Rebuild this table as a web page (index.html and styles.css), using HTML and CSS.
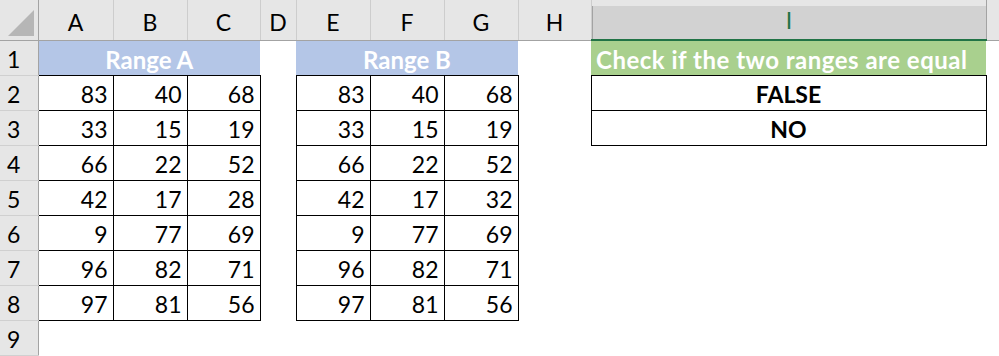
FILE: index.html
```html
<!DOCTYPE html>
<html lang="en">
<head>
<meta charset="utf-8">
<title>Compare ranges</title>
<link rel="stylesheet" href="styles.css">
</head>
<body>
<table class="sheet">
  <colgroup>
    <col class="c-row">
    <col class="c-a"><col class="c-b"><col class="c-c">
    <col class="c-d">
    <col class="c-e"><col class="c-f"><col class="c-g">
    <col class="c-h">
    <col class="c-i">
    <col class="c-j">
  </colgroup>
  <thead>
    <tr class="hdr">
      <th class="corner"><span class="tri"></span></th>
      <th>A</th><th>B</th><th>C</th><th>D</th>
      <th>E</th><th>F</th><th>G</th><th>H</th>
      <th class="sel"><div class="sel-in">I</div></th>
      <th class="last"></th>
    </tr>
  </thead>
  <tbody>
    <tr>
      <th class="rn">1</th>
      <td colspan="3" class="title blue">Range A</td>
      <td></td>
      <td colspan="3" class="title blue">Range B</td>
      <td></td>
      <td class="title green left">Check if the two ranges are equal</td>
      <td></td>
    </tr>
    <tr>
      <th class="rn">2</th>
      <td class="n">83</td><td class="n">40</td><td class="n">68</td><td></td>
      <td class="n">83</td><td class="n">40</td><td class="n">68</td><td></td>
      <td class="res">FALSE</td><td></td>
    </tr>
    <tr>
      <th class="rn">3</th>
      <td class="n">33</td><td class="n">15</td><td class="n">19</td><td></td>
      <td class="n">33</td><td class="n">15</td><td class="n">19</td><td></td>
      <td class="res">NO</td><td></td>
    </tr>
    <tr>
      <th class="rn">4</th>
      <td class="n">66</td><td class="n">22</td><td class="n">52</td><td></td>
      <td class="n">66</td><td class="n">22</td><td class="n">52</td><td></td>
      <td></td><td></td>
    </tr>
    <tr>
      <th class="rn">5</th>
      <td class="n">42</td><td class="n">17</td><td class="n">28</td><td></td>
      <td class="n">42</td><td class="n">17</td><td class="n">32</td><td></td>
      <td></td><td></td>
    </tr>
    <tr>
      <th class="rn">6</th>
      <td class="n">9</td><td class="n">77</td><td class="n">69</td><td></td>
      <td class="n">9</td><td class="n">77</td><td class="n">69</td><td></td>
      <td></td><td></td>
    </tr>
    <tr>
      <th class="rn">7</th>
      <td class="n">96</td><td class="n">82</td><td class="n">71</td><td></td>
      <td class="n">96</td><td class="n">82</td><td class="n">71</td><td></td>
      <td></td><td></td>
    </tr>
    <tr>
      <th class="rn">8</th>
      <td class="n">97</td><td class="n">81</td><td class="n">56</td><td></td>
      <td class="n">97</td><td class="n">81</td><td class="n">56</td><td></td>
      <td></td><td></td>
    </tr>
    <tr>
      <th class="rn">9</th>
      <td></td><td></td><td></td><td></td>
      <td></td><td></td><td></td><td></td>
      <td></td><td></td>
    </tr>
  </tbody>
</table>
</body>
</html>
```
FILE: styles.css
```css
html, body {
  margin: 0;
  padding: 0;
  background: #fff;
}

.sheet {
  border-collapse: collapse;
  border-spacing: 0;
  table-layout: fixed;
  width: 999px;
  font-family: "Lato", "Liberation Sans", sans-serif;
  font-size: 23px;
  color: #000;
}

/* column widths */
.c-row { width: 38px; }
.c-a { width: 75px; }
.c-b { width: 74px; }
.c-c { width: 73px; }
.c-d { width: 36px; }
.c-e { width: 74px; }
.c-f { width: 74px; }
.c-g { width: 74px; }
.c-h { width: 73px; }
.c-i { width: 395px; }
.c-j { width: 13px; }

/* column header strip */
.hdr th {
  height: 40px;
  padding: 0 0 4px;
  box-sizing: border-box;
  background: #e6e6e6;
  font-weight: normal;
  text-align: center;
  vertical-align: bottom;
  line-height: 28px;
  border-right: 1px solid #cdcdcd;
  border-bottom: 1px solid #a3a3a3;
}

.hdr th.corner {
  position: relative;
  border-right: 1px solid #a3a3a3;
}

.tri {
  position: absolute;
  right: 4px;
  bottom: 4px;
  width: 0;
  height: 0;
  border-left: 26px solid transparent;
  border-bottom: 26px solid #b6b6b6;
}

.hdr th.sel {
  padding: 0;
  vertical-align: bottom;
  border-bottom: 2px solid #217346;
  border-right: 1px solid #a3a3a3;
}

.sel-in {
  height: 33px;
  box-sizing: border-box;
  background: #d2d2d2;
  border-left: 1px solid #a3a3a3;
  color: #217346;
  line-height: 28px;
  padding-bottom: 4px;
}

.hdr th.last {
  border-right: none;
}

/* row numbers */
.rn {
  height: 35px;
  padding: 0 0 0 7px;
  box-sizing: border-box;
  background: #e6e6e6;
  font-weight: normal;
  text-align: left;
  vertical-align: bottom;
  line-height: 31px;
  border-right: 1px solid #a3a3a3;
  border-bottom: 1px solid #d0d0d0;
}

tbody td {
  height: 35px;
  padding: 0;
  box-sizing: border-box;
  vertical-align: bottom;
  line-height: 31px;
  white-space: nowrap;
}

/* numeric cells inside the two ranges */
.n {
  text-align: right;
  padding-right: 5px;
  border: 1px solid #000;
}

.title {
  color: #fff;
  font-weight: bold;
  font-size: 24px;
  text-align: center;
}

.blue { background: #b4c6e7; }

.green {
  background: #a9d08e;
  letter-spacing: 0.5px;
}

.left {
  text-align: left;
  padding-left: 5px;
}

.res {
  font-weight: bold;
  text-align: center;
  border: 1px solid #000;
}
```
